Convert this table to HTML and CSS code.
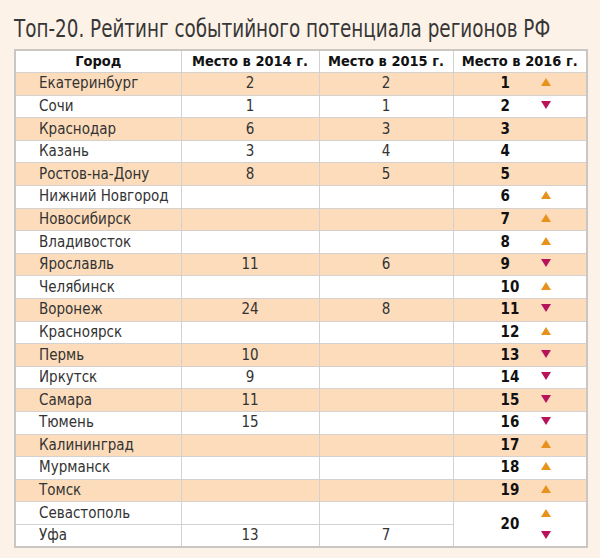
FILE: index.html
```html
<!DOCTYPE html>
<html lang="ru">
<head>
<meta charset="utf-8">
<link rel="stylesheet" href="styles.css">
</head>
<body>
<div class="page">
  <h1 class="title"><span class="title-text">Топ-20. Рейтинг событийного потенциала регионов РФ</span></h1>
  <table class="rating">
    <colgroup>
      <col class="c1"><col class="c2"><col class="c3"><col class="c4">
    </colgroup>
    <thead>
      <tr><th>Город</th><th>Место в 2014 г.</th><th>Место в 2015 г.</th><th>Место в 2016 г.</th></tr>
    </thead>
    <tbody>
      <tr class="odd"><td class="city">Екатеринбург</td><td>2</td><td>2</td><td class="rank"><span class="n">1</span><span class="up"></span></td></tr>
      <tr><td class="city">Сочи</td><td>1</td><td>1</td><td class="rank"><span class="n">2</span><span class="down"></span></td></tr>
      <tr class="odd"><td class="city">Краснодар</td><td>6</td><td>3</td><td class="rank"><span class="n">3</span></td></tr>
      <tr><td class="city">Казань</td><td>3</td><td>4</td><td class="rank"><span class="n">4</span></td></tr>
      <tr class="odd"><td class="city">Ростов-на-Дону</td><td>8</td><td>5</td><td class="rank"><span class="n">5</span></td></tr>
      <tr><td class="city">Нижний Новгород</td><td></td><td></td><td class="rank"><span class="n">6</span><span class="up"></span></td></tr>
      <tr class="odd"><td class="city">Новосибирск</td><td></td><td></td><td class="rank"><span class="n">7</span><span class="up"></span></td></tr>
      <tr><td class="city">Владивосток</td><td></td><td></td><td class="rank"><span class="n">8</span><span class="up"></span></td></tr>
      <tr class="odd"><td class="city">Ярославль</td><td>11</td><td>6</td><td class="rank"><span class="n">9</span><span class="down"></span></td></tr>
      <tr><td class="city">Челябинск</td><td></td><td></td><td class="rank"><span class="n">10</span><span class="up"></span></td></tr>
      <tr class="odd"><td class="city">Воронеж</td><td>24</td><td>8</td><td class="rank"><span class="n">11</span><span class="down"></span></td></tr>
      <tr><td class="city">Красноярск</td><td></td><td></td><td class="rank"><span class="n">12</span><span class="up"></span></td></tr>
      <tr class="odd"><td class="city">Пермь</td><td>10</td><td></td><td class="rank"><span class="n">13</span><span class="down"></span></td></tr>
      <tr><td class="city">Иркутск</td><td>9</td><td></td><td class="rank"><span class="n">14</span><span class="down"></span></td></tr>
      <tr class="odd"><td class="city">Самара</td><td>11</td><td></td><td class="rank"><span class="n">15</span><span class="down"></span></td></tr>
      <tr><td class="city">Тюмень</td><td>15</td><td></td><td class="rank"><span class="n">16</span><span class="down"></span></td></tr>
      <tr class="odd"><td class="city">Калининград</td><td></td><td></td><td class="rank"><span class="n">17</span><span class="up"></span></td></tr>
      <tr><td class="city">Мурманск</td><td></td><td></td><td class="rank"><span class="n">18</span><span class="up"></span></td></tr>
      <tr class="odd"><td class="city">Томск</td><td></td><td></td><td class="rank"><span class="n">19</span><span class="up"></span></td></tr>
      <tr><td class="city">Севастополь</td><td></td><td></td><td class="rank tie" rowspan="2"><span class="n">20</span><span class="pair"><span class="up"></span><span class="down"></span></span></td></tr>
      <tr><td class="city">Уфа</td><td>13</td><td>7</td></tr>
    </tbody>
  </table>
</div>
</body>
</html>
```

FILE: styles.css
```css
html, body {
  margin: 0;
  padding: 0;
  background: #fdf2e8;
}
.page {
  width: 600px;
  height: 558px;
  padding: 14px 0 0 14px;
  box-sizing: border-box;
  font-family: "DejaVu Sans Condensed", "DejaVu Sans", sans-serif;
  color: #333333;
  overflow: hidden;
}
.title {
  margin: 0;
  height: 35px;
  font-size: 24px;
  line-height: 30px;
  font-weight: normal;
  color: #363636;
  white-space: nowrap;
}
.title-text {
  display: inline-block;
  transform: scaleX(0.85);
  transform-origin: left center;
}
.rating {
  border-collapse: collapse;
  width: 572px;
  table-layout: fixed;
  border: 2px solid #c9c6c3;
}
.c1 { width: 166px; }
.c2 { width: 138px; }
.c3 { width: 134px; }
.c4 { width: 134px; }
.rating tr {
  height: 22.6px;
  background: #ffffff;
}
.rating tr.odd {
  background: #fcdcbb;
}
.rating th, .rating td {
  border: 1.5px solid #d4d1ce;
  padding: 0;
  text-align: center;
  font-size: 15px;
  line-height: 19px;
  vertical-align: middle;
  white-space: nowrap;
}
.rating th {
  font-weight: bold;
  font-size: 14.5px;
  color: #111;
  background: #ffffff;
}
.rating td.city {
  text-align: left;
  padding-left: 23px;
}
.rating td.rank {
  text-align: left;
  padding-left: 47px;
  font-weight: bold;
  font-size: 15px;
  color: #111;
}
.n {
  display: inline-block;
  width: 40px;
}
.up, .down {
  display: inline-block;
  width: 0;
  height: 0;
  border-left: 5px solid transparent;
  border-right: 5px solid transparent;
  vertical-align: 2px;
}
.up {
  border-bottom: 8px solid #e8921e;
}
.down {
  border-top: 8px solid #b8135a;
}
.pair {
  display: inline-flex;
  flex-direction: column;
  justify-content: space-between;
  height: 30px;
  vertical-align: middle;
}
```
